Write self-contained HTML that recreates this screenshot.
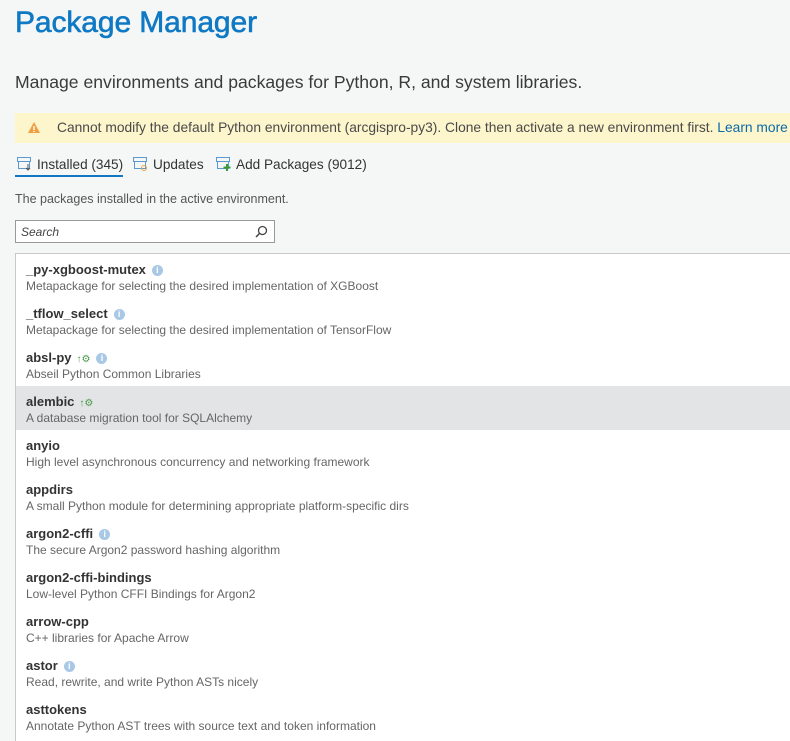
<!DOCTYPE html>
<html><head><style>
*{margin:0;padding:0;box-sizing:border-box}
html,body{width:790px;height:741px;overflow:hidden}
body{background:#f5f6f6;font-family:"Liberation Sans",sans-serif;position:relative;color:#333}
.abs{position:absolute;white-space:nowrap}
h1{position:absolute;left:15px;top:6px;font-size:30px;font-weight:normal;color:#0f79c4;-webkit-text-stroke:0.6px #0f79c4;letter-spacing:-0.1px}
.sub{left:15px;top:72px;font-size:17.6px;color:#3a3a3a}
.warn{position:absolute;left:15px;top:113px;width:775px;height:30px;background:#fdf5cb;overflow:hidden}
.warn span{position:absolute;left:42px;top:7px;font-size:13.8px;color:#4a4a4a;white-space:nowrap}
.tab{top:157px;font-size:13.6px;color:#333}
.list{position:absolute;left:15px;top:253px;width:775px;height:490px;background:#fff;border:1px solid #c8c8c8;border-right:none;overflow:hidden}
.row{position:absolute;left:0;width:800px;height:44px}
.row b{position:absolute;left:10px;top:8px;font-size:13px;font-weight:bold;color:#333;white-space:nowrap}
.row i{position:absolute;left:10px;top:25px;font-size:12px;font-style:normal;color:#666;white-space:nowrap}
.info{display:inline-block;width:11px;height:11px;border-radius:50%;background:#a9c8e6;color:#fff;font-size:9px;line-height:11px;text-align:center;margin-left:6px;vertical-align:1px;font-weight:bold}
.up{color:#4a9a4a;font-size:10px;margin-left:5px;font-weight:normal}
</style></head><body>
<div class="abs" style="left:727px;top:-9px;font-size:11px;color:#555">showhidden</div>
<h1>Package Manager</h1>
<div class="abs sub">Manage environments and packages for Python, R, and system libraries.</div>
<div class="warn"><svg style="position:absolute;left:12px;top:8px" width="14" height="13"><path d="M7 1L13 12H1Z" fill="#f0a040"/><rect x="6.3" y="5" width="1.4" height="4" fill="#fff"/><rect x="6.3" y="9.8" width="1.4" height="1.3" fill="#fff"/></svg><span>Cannot modify the default Python environment (arcgispro-py3). Clone then activate a new environment first. <span style="position:static;color:#0b6aa8">Learn more</span></span></div>
<svg class="abs" style="left:17px;top:157px" width="16" height="14"><rect x="0.5" y="0.5" width="13" height="4" fill="none" stroke="#5a9ad0"/><rect x="1.5" y="4.5" width="11" height="7" fill="none" stroke="#5a9ad0"/><path d="M11 7v6M9 11l2 2 2-2" stroke="#555" fill="none"/></svg>
<div class="abs tab" style="left:37px">Installed (345)</div>
<div class="abs" style="left:15px;top:175px;width:108px;height:2px;background:#0f79c4"></div>
<svg class="abs" style="left:133px;top:157px" width="16" height="14"><rect x="0.5" y="0.5" width="13" height="4" fill="none" stroke="#5a9ad0"/><rect x="1.5" y="4.5" width="11" height="7" fill="none" stroke="#5a9ad0"/><circle cx="11" cy="11" r="2.5" fill="none" stroke="#f0a040"/></svg>
<div class="abs tab" style="left:153px">Updates</div>
<svg class="abs" style="left:216px;top:157px" width="16" height="14"><rect x="0.5" y="0.5" width="13" height="4" fill="none" stroke="#5a9ad0"/><rect x="1.5" y="4.5" width="11" height="7" fill="none" stroke="#5a9ad0"/><path d="M11 7v7M7.5 10.5h7" stroke="#3a9a3a" stroke-width="2"/></svg>
<div class="abs tab" style="left:236px">Add Packages (9012)</div>
<div class="abs" style="left:15px;top:192px;font-size:12.5px;color:#555">The packages installed in the active environment.</div>
<div class="abs" style="left:15px;top:220px;width:260px;height:23px;background:#fff;border:1px solid #999"><span style="position:absolute;left:5px;top:4px;font-size:12px;font-style:italic;color:#444">Search</span><svg style="position:absolute;right:6px;top:4px" width="13" height="13"><circle cx="7.5" cy="5.5" r="4" fill="none" stroke="#444" stroke-width="1.3"/><path d="M4.5 8.5L1 12" stroke="#444" stroke-width="1.5"/></svg></div>
<div class="list">
<div class="row" style="top:0"><b>_py-xgboost-mutex<span class="info">i</span></b><i>Metapackage for selecting the desired implementation of XGBoost</i></div>
<div class="row" style="top:44px"><b>_tflow_select<span class="info">i</span></b><i>Metapackage for selecting the desired implementation of TensorFlow</i></div>
<div class="row" style="top:88px"><b>absl-py<span class="up">↑⚙</span><span class="info">i</span></b><i>Abseil Python Common Libraries</i></div>
<div class="row" style="top:132px;background:#e3e4e5"><b>alembic<span class="up">↑⚙</span></b><i>A database migration tool for SQLAlchemy</i></div>
<div class="row" style="top:176px"><b>anyio</b><i>High level asynchronous concurrency and networking framework</i></div>
<div class="row" style="top:220px"><b>appdirs</b><i>A small Python module for determining appropriate platform-specific dirs</i></div>
<div class="row" style="top:264px"><b>argon2-cffi<span class="info">i</span></b><i>The secure Argon2 password hashing algorithm</i></div>
<div class="row" style="top:308px"><b>argon2-cffi-bindings</b><i>Low-level Python CFFI Bindings for Argon2</i></div>
<div class="row" style="top:352px"><b>arrow-cpp</b><i>C++ libraries for Apache Arrow</i></div>
<div class="row" style="top:396px"><b>astor<span class="info">i</span></b><i>Read, rewrite, and write Python ASTs nicely</i></div>
<div class="row" style="top:440px"><b>asttokens</b><i>Annotate Python AST trees with source text and token information</i></div>
</div>
</body></html>
